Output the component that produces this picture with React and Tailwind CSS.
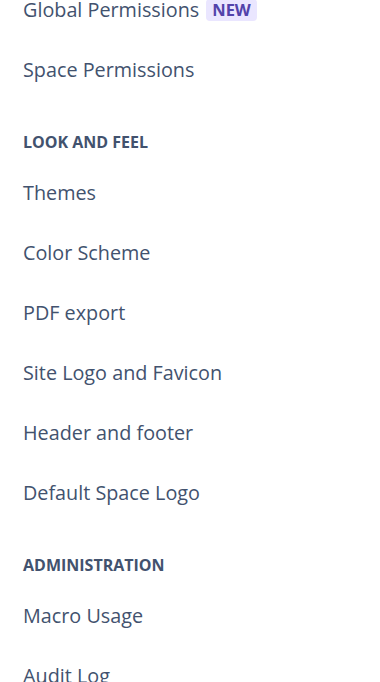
const sections = [
  {
    items: [{ label: "Global Permissions", badge: "NEW" }, { label: "Space Permissions" }],
  },
  {
    title: "LOOK AND FEEL",
    items: [
      { label: "Themes" },
      { label: "Color Scheme" },
      { label: "PDF export" },
      { label: "Site Logo and Favicon" },
      { label: "Header and footer" },
      { label: "Default Space Logo" },
    ],
  },
  {
    title: "ADMINISTRATION",
    items: [{ label: "Macro Usage" }, { label: "Audit Log" }],
  },
]

const App = () => {
  return (
    <div className="h-[682px] w-[380px] overflow-hidden bg-white font-['Open_Sans',sans-serif] text-[#42526e]">
      <nav className="-mt-[20px] flex flex-col pl-[23px]">
        {sections.map((section, i) => (
          <div key={i} className="flex flex-col">
            {section.title && (
              <div className="flex h-[63px] items-end pb-[11px]">
                <span className="text-[16px] font-bold leading-[20px]">{section.title}</span>
              </div>
            )}
            {section.items.map((item) => (
              <div key={item.label} className="flex h-[60px] items-center gap-[7px]">
                <span className="text-[19.8px] leading-[24px]">{item.label}</span>
                {item.badge && (
                  <span className="rounded-[4px] bg-[#eae6ff] px-[6px] text-[16.5px] font-bold leading-[22px] text-[#5243aa]">
                    {item.badge}
                  </span>
                )}
              </div>
            ))}
          </div>
        ))}
      </nav>
    </div>
  )
}

export default App
